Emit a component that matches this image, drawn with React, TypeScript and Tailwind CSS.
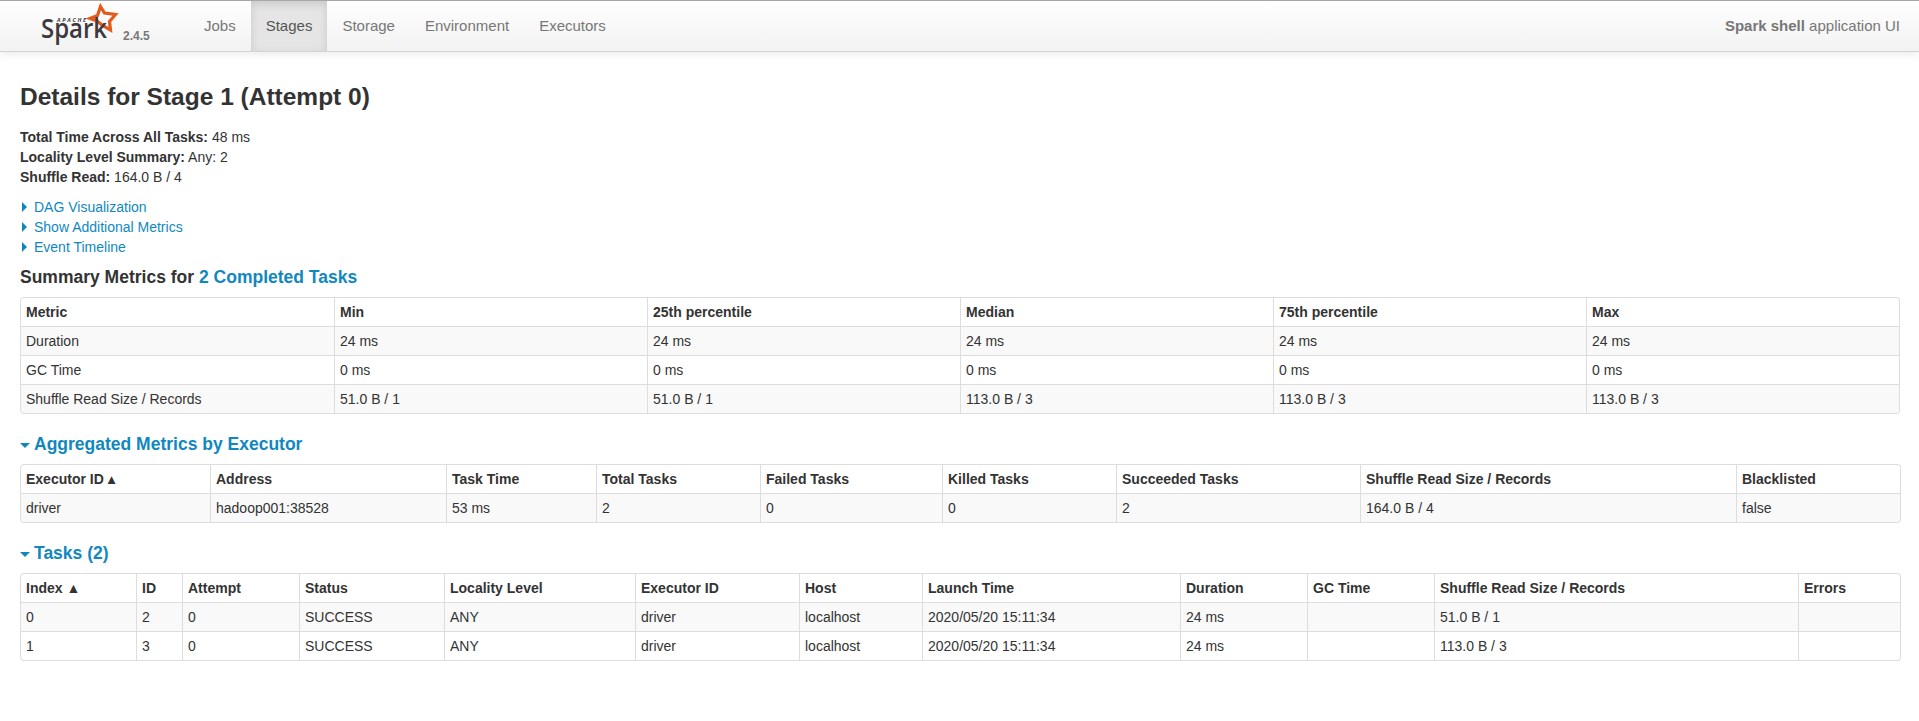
const summaryRows = [
  ['Duration', '24 ms', '24 ms', '24 ms', '24 ms', '24 ms'],
  ['GC Time', '0 ms', '0 ms', '0 ms', '0 ms', '0 ms'],
  ['Shuffle Read Size / Records', '51.0 B / 1', '51.0 B / 1', '113.0 B / 3', '113.0 B / 3', '113.0 B / 3'],
];

const taskRows = [
  ['0', '2', '0', 'SUCCESS', 'ANY', 'driver', 'localhost', '2020/05/20 15:11:34', '24 ms', '', '51.0 B / 1', ''],
  ['1', '3', '0', 'SUCCESS', 'ANY', 'driver', 'localhost', '2020/05/20 15:11:34', '24 ms', '', '113.0 B / 3', ''],
];

const tabs = ['Jobs', 'Stages', 'Storage', 'Environment', 'Executors'];

const summaryWidths = ['w-[314px]', '', '', '', '', ''];
const executorWidths = ['w-[190px]', 'w-[236px]', 'w-[150px]', 'w-[164px]', 'w-[182px]', 'w-[174px]', 'w-[244px]', 'w-[376px]', 'w-[164px]'];
const taskWidths = ['w-[116px]', 'w-[46px]', 'w-[117px]', 'w-[145px]', 'w-[191px]', 'w-[164px]', 'w-[123px]', 'w-[258px]', 'w-[127px]', 'w-[127px]', 'w-[364px]', 'w-[102px]'];

function SparkLogo() {
  return (
    <svg width="90" height="46" viewBox="0 0 90 46" className="block">
      <path
        d="M60.5 5.5 L64.5 12 L75.5 13.5 L69.5 20.5 L70.5 29 L62.5 24.5 L57 20 L50 17.5 L57.5 14.5 Z"
        fill="none"
        stroke="#e25a1c"
        strokeWidth="3.2"
      />
      <text x="17" y="21" fontSize="5.5" fontWeight="700" fontStyle="italic" textLength="29" fill="#3c3a3e" fontFamily="Open Sans, sans-serif">
        APACHE
      </text>
      <text x="1" y="37" fontSize="27" fontWeight="600" textLength="66" lengthAdjust="spacingAndGlyphs" fill="#3c3a3e" fontFamily="Open Sans, sans-serif">
        Spark
      </text>
    </svg>
  );
}

function Navbar() {
  return (
    <div className="flex h-[52px] border-t border-b border-t-[#a7a7a7] border-b-[#d4d4d4] bg-gradient-to-b from-white to-[#f2f2f2] text-[15px] shadow-[0_1px_10px_rgba(0,0,0,0.1)]">
      <div className="flex w-[189px] shrink-0">
        <div className="ml-[40px]">
          <SparkLogo />
        </div>
        <span className="-ml-[7px] mt-[25px] text-[12px] leading-[20px] font-bold text-[#777]">2.4.5</span>
      </div>
      {tabs.map((tab) => (
        <a
          key={tab}
          className={`px-[15px] pt-[11px] leading-[28px] ${
            tab === 'Stages'
              ? 'bg-[#e5e5e5] text-[#555] shadow-[inset_0_3px_8px_rgba(0,0,0,0.125)]'
              : 'text-[#777]'
          }`}
        >
          {tab}
        </a>
      ))}
      <p className="ml-auto pt-[11px] pr-[19px] leading-[28px] text-[#777]">
        <strong>Spark shell</strong> application UI
      </p>
    </div>
  );
}

function Table({ head, rows, widths }: { head: string[]; rows: string[][]; widths: string[] }) {
  return (
    <table className="mb-[20px] w-full table-fixed border-separate border-spacing-0 rounded-[4px] border border-l-0 border-[#ddd]">
      <thead>
        <tr>
          {head.map((h, i) => (
            <th
              key={i}
              className={`border-l border-[#ddd] px-[5px] py-[4px] text-left align-top font-bold ${
                i === 0 ? 'rounded-tl-[4px]' : ''
              } ${widths[i]}`}
            >
              {h}
            </th>
          ))}
        </tr>
      </thead>
      <tbody>
        {rows.map((row, r) => (
          <tr key={r} className={r % 2 === 0 ? 'bg-[#f9f9f9]' : ''}>
            {row.map((cell, i) => (
              <td
                key={i}
                className={`border-t border-l border-[#ddd] px-[5px] py-[4px] align-top ${
                  r === rows.length - 1 && i === 0 ? 'rounded-bl-[4px]' : ''
                } ${r === rows.length - 1 && i === row.length - 1 ? 'rounded-br-[4px]' : ''}`}
              >
                {cell}
              </td>
            ))}
          </tr>
        ))}
      </tbody>
    </table>
  );
}

function ClosedToggle({ label }: { label: string }) {
  return (
    <div className="text-[#1088bf]">
      <span className="mr-[7px] ml-[2px] inline-block border-y-[5px] border-l-[5px] border-y-transparent border-l-[#1088bf]" />
      <a>{label}</a>
    </div>
  );
}

function OpenHeading({ label }: { label: string }) {
  return (
    <h4 className="my-[10px] text-[17.5px] leading-[20px] font-bold text-[#1088bf]">
      <span className="mr-[4px] mb-[2px] inline-block border-x-[5px] border-t-[5px] border-x-transparent border-t-[#1088bf]" />
      <a>{label}</a>
    </h4>
  );
}

export default function App() {
  return (
    <div className="min-h-[721px] bg-white font-['Liberation_Sans',Arial,sans-serif] text-[14px] leading-[20px] text-[#333]">
      <Navbar />
      <div className="pt-[25px] pr-[19px] pl-[20px]">
        <h3 className="mb-[10px] text-[24.5px] leading-[40px] font-bold">Details for Stage 1 (Attempt 0)</h3>

        <ul className="mb-[10px]">
          <li><strong>Total Time Across All Tasks:</strong> 48 ms</li>
          <li><strong>Locality Level Summary:</strong> Any: 2</li>
          <li><strong>Shuffle Read:</strong> 164.0 B / 4</li>
        </ul>

        <ClosedToggle label="DAG Visualization" />
        <ClosedToggle label="Show Additional Metrics" />
        <ClosedToggle label="Event Timeline" />

        <h4 className="my-[10px] text-[17.5px] leading-[20px] font-bold">
          Summary Metrics for <a className="text-[#1088bf]">2 Completed Tasks</a>
        </h4>
        <Table
          widths={summaryWidths}
          head={['Metric', 'Min', '25th percentile', 'Median', '75th percentile', 'Max']}
          rows={summaryRows}
        />

        <OpenHeading label="Aggregated Metrics by Executor" />
        <Table
          widths={executorWidths}
          head={[
            'Executor ID ▴',
            'Address',
            'Task Time',
            'Total Tasks',
            'Failed Tasks',
            'Killed Tasks',
            'Succeeded Tasks',
            'Shuffle Read Size / Records',
            'Blacklisted',
          ]}
          rows={[['driver', 'hadoop001:38528', '53 ms', '2', '0', '0', '2', '164.0 B / 4', 'false']]}
        />

        <OpenHeading label="Tasks (2)" />
        <Table
          widths={taskWidths}
          head={[
            'Index ▲',
            'ID',
            'Attempt',
            'Status',
            'Locality Level',
            'Executor ID',
            'Host',
            'Launch Time',
            'Duration',
            'GC Time',
            'Shuffle Read Size / Records',
            'Errors',
          ]}
          rows={taskRows}
        />
      </div>
    </div>
  );
}
